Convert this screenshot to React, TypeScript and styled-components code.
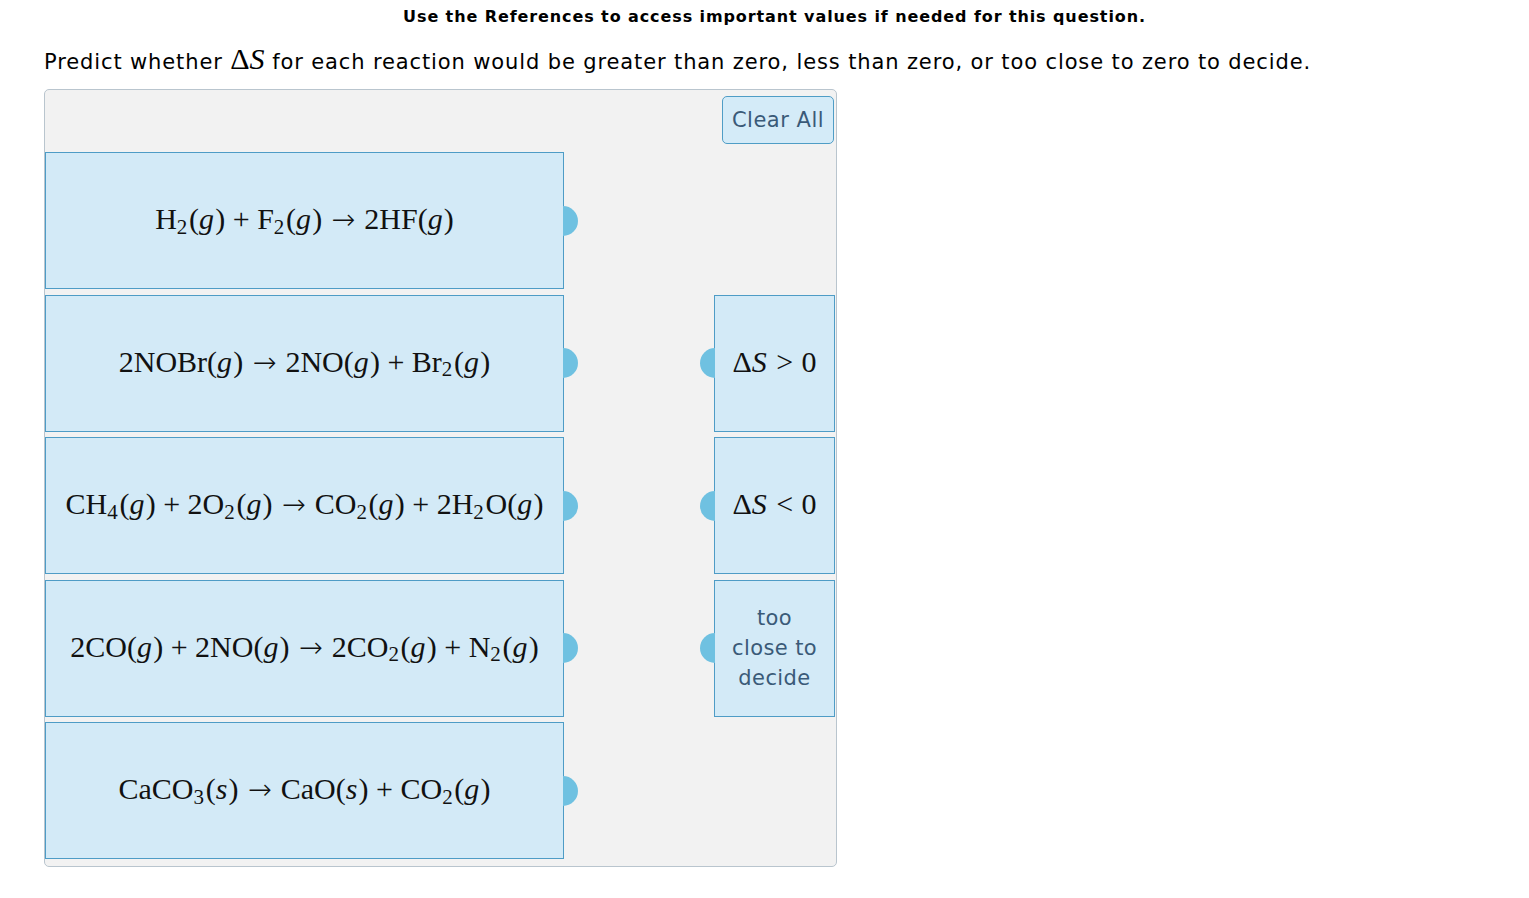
import React from 'react';
import styled, { createGlobalStyle } from 'styled-components';

const GlobalStyle = createGlobalStyle`
	body {
		margin: 0;
		background: #fff;
		font-family: 'DejaVu Sans', Verdana, sans-serif;
		color: #000;
	}
`;

const Page = styled.div`
	padding: 7px 0 0 44px;
`;

const Notice = styled.div`
	font-weight: bold;
	font-size: 16px;
	letter-spacing: 0.9px;
	line-height: 20px;
	text-align: center;
	margin-left: -44px;
	padding-left: 20px;
`;

const Prompt = styled.p`
	margin: 17px 0 12px;
	font-size: 21px;
	letter-spacing: 0.88px;
	line-height: 30px;
`;

const MathInline = styled.span`
	font-family: 'Liberation Serif', 'Times New Roman', serif;
	font-size: 30px;
	letter-spacing: 0;
	i {
		font-style: italic;
	}
`;

const Panel = styled.div`
	width: 793px;
	box-sizing: border-box;
	background: #f2f2f2;
	border: 1px solid #b9c5ce;
	border-radius: 5px;
	padding: 6px 1px 7px 0;
`;

const Toolbar = styled.div`
	display: flex;
	justify-content: flex-end;
	padding-right: 1px;
	margin-bottom: 8px;
`;

const ClearButton = styled.button`
	height: 48px;
	width: 112px;
	padding: 0;
	background: #d4ebf8;
	border: 1px solid #4f9dc6;
	border-radius: 5px;
	color: #3a5a78;
	font-family: 'DejaVu Sans', Verdana, sans-serif;
	font-size: 21px;
	letter-spacing: 0.5px;
`;

const Board = styled.div`
	display: grid;
	grid-template-columns: 519px 1fr 121px;
	grid-auto-rows: 137px;
	row-gap: 5.5px;
`;

const Card = styled.div<{ $side: 'left' | 'right'; $row: number }>`
	position: relative;
	grid-column: ${(p) => (p.$side === 'left' ? 1 : 3)};
	grid-row: ${(p) => p.$row};
	box-sizing: border-box;
	background: #d3eaf7;
	border: 1px solid #4e9cc6;
	display: flex;
	align-items: center;
	justify-content: center;
	text-align: center;
`;

// half-round connector peeking out from a card edge
const KnobClip = styled.span<{ $side: 'left' | 'right' }>`
	position: absolute;
	top: 0;
	bottom: 0;
	width: 16px;
	overflow: hidden;
	${(p) => (p.$side === 'left' ? 'right: -16px;' : 'left: -16px;')}
`;

const Knob = styled.span<{ $side: 'left' | 'right' }>`
	position: absolute;
	top: 50%;
	width: 30px;
	height: 30px;
	margin-top: -15px;
	border-radius: 50%;
	background: #6fc1e1;
	${(p) => (p.$side === 'left' ? 'right: 1px;' : 'left: 1px;')}
`;

const Equation = styled.span`
	font-family: 'Liberation Serif', 'Times New Roman', serif;
	font-size: 30px;
	color: #111;
	white-space: nowrap;
	margin-top: -3px;
	sub {
		font-size: 0.7em;
		vertical-align: -0.22em;
		line-height: 0;
		margin-right: 0.08em;
	}
	i {
		font-style: italic;
		padding-right: 0.04em;
	}
	.op {
		margin: 0 0.25em;
	}
	.rel {
		margin: 0 0.28em;
	}
	.arrow {
		display: inline-block;
		font-family: 'DejaVu Sans', sans-serif;
		font-size: 0.95em;
		font-weight: 200;
		margin: 0 0.32em;
	}
`;

const Label = styled.span`
	font-size: 21px;
	letter-spacing: 0.4px;
	line-height: 30px;
	color: #3a5a78;
	padding: 0 10px;
`;

const g = <i>g</i>;
const s = <i>s</i>;

const Plus = () => <span className="op">+</span>;
const Arrow = () => <span className="arrow">→</span>;

const reactions: React.ReactNode[] = [
	<>
		H<sub>2</sub>({g})<Plus />F<sub>2</sub>({g})<Arrow />2HF({g})
	</>,
	<>
		2NOBr({g})<Arrow />2NO({g})<Plus />Br<sub>2</sub>({g})
	</>,
	<>
		CH<sub>4</sub>({g})<Plus />2O<sub>2</sub>({g})<Arrow />CO<sub>2</sub>({g})<Plus />2H<sub>2</sub>O({g})
	</>,
	<>
		2CO({g})<Plus />2NO({g})<Arrow />2CO<sub>2</sub>({g})<Plus />N<sub>2</sub>({g})
	</>,
	<>
		CaCO<sub>3</sub>({s})<Arrow />CaO({s})<Plus />CO<sub>2</sub>({g})
	</>,
];

const answers: React.ReactNode[] = [
	<Equation>
		Δ<i>S</i>
		<span className="rel">&gt;</span>0
	</Equation>,
	<Equation>
		Δ<i>S</i>
		<span className="rel">&lt;</span>0
	</Equation>,
	<Label>
		too
		<br />
		close to
		<br />
		decide
	</Label>,
];

export default function App() {
	return (
		<>
			<GlobalStyle />
			<Page>
				<Notice>Use the References to access important values if needed for this question.</Notice>
				<Prompt>
					Predict whether{' '}
					<MathInline>
						Δ<i>S</i>
					</MathInline>{' '}
					for each reaction would be greater than zero, less than zero, or too close to zero to decide.
				</Prompt>
				<Panel>
					<Toolbar>
						<ClearButton>Clear All</ClearButton>
					</Toolbar>
					<Board>
						{reactions.map((r, i) => (
							<Card key={`r${i}`} $side="left" $row={i + 1}>
								<Equation>{r}</Equation>
								<KnobClip $side="left">
									<Knob $side="left" />
								</KnobClip>
							</Card>
						))}
						{answers.map((a, i) => (
							<Card key={`a${i}`} $side="right" $row={i + 2}>
								{a}
								<KnobClip $side="right">
									<Knob $side="right" />
								</KnobClip>
							</Card>
						))}
					</Board>
				</Panel>
			</Page>
		</>
	);
}
